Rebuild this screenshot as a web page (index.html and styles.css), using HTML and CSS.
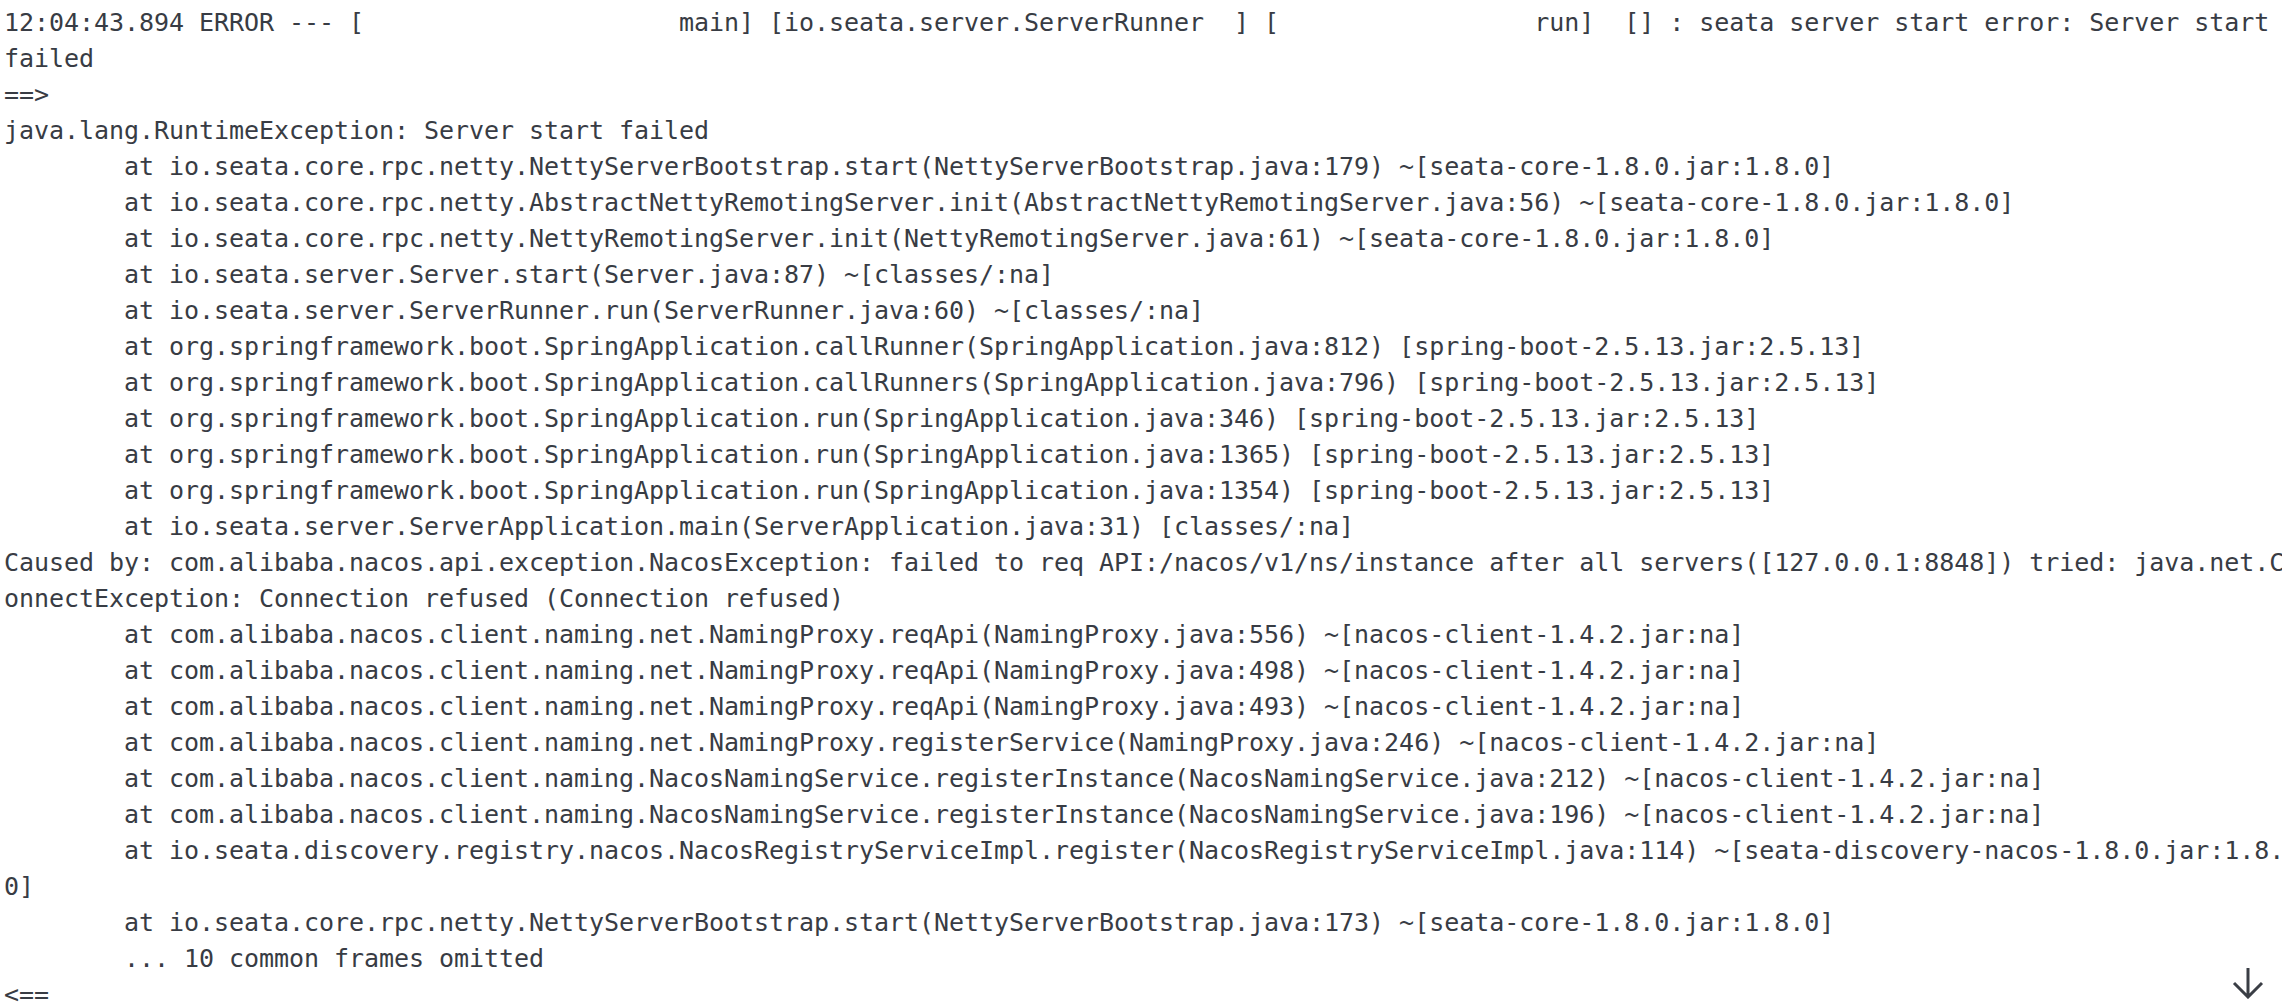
FILE: index.html
```html
<!DOCTYPE html>
<html lang="en">
<head>
<meta charset="utf-8">
<title>Log</title>
<link rel="stylesheet" href="styles.css">
</head>
<body>
<main class="viewer">
<pre class="log">12:04:43.894 ERROR --- [                     main] [io.seata.server.ServerRunner  ] [                 run]  [] : seata server start error: Server start
failed
==&gt;
java.lang.RuntimeException: Server start failed
	at io.seata.core.rpc.netty.NettyServerBootstrap.start(NettyServerBootstrap.java:179) ~[seata-core-1.8.0.jar:1.8.0]
	at io.seata.core.rpc.netty.AbstractNettyRemotingServer.init(AbstractNettyRemotingServer.java:56) ~[seata-core-1.8.0.jar:1.8.0]
	at io.seata.core.rpc.netty.NettyRemotingServer.init(NettyRemotingServer.java:61) ~[seata-core-1.8.0.jar:1.8.0]
	at io.seata.server.Server.start(Server.java:87) ~[classes/:na]
	at io.seata.server.ServerRunner.run(ServerRunner.java:60) ~[classes/:na]
	at org.springframework.boot.SpringApplication.callRunner(SpringApplication.java:812) [spring-boot-2.5.13.jar:2.5.13]
	at org.springframework.boot.SpringApplication.callRunners(SpringApplication.java:796) [spring-boot-2.5.13.jar:2.5.13]
	at org.springframework.boot.SpringApplication.run(SpringApplication.java:346) [spring-boot-2.5.13.jar:2.5.13]
	at org.springframework.boot.SpringApplication.run(SpringApplication.java:1365) [spring-boot-2.5.13.jar:2.5.13]
	at org.springframework.boot.SpringApplication.run(SpringApplication.java:1354) [spring-boot-2.5.13.jar:2.5.13]
	at io.seata.server.ServerApplication.main(ServerApplication.java:31) [classes/:na]
Caused by: com.alibaba.nacos.api.exception.NacosException: failed to req API:/nacos/v1/ns/instance after all servers([127.0.0.1:8848]) tried: java.net.C
onnectException: Connection refused (Connection refused)
	at com.alibaba.nacos.client.naming.net.NamingProxy.reqApi(NamingProxy.java:556) ~[nacos-client-1.4.2.jar:na]
	at com.alibaba.nacos.client.naming.net.NamingProxy.reqApi(NamingProxy.java:498) ~[nacos-client-1.4.2.jar:na]
	at com.alibaba.nacos.client.naming.net.NamingProxy.reqApi(NamingProxy.java:493) ~[nacos-client-1.4.2.jar:na]
	at com.alibaba.nacos.client.naming.net.NamingProxy.registerService(NamingProxy.java:246) ~[nacos-client-1.4.2.jar:na]
	at com.alibaba.nacos.client.naming.NacosNamingService.registerInstance(NacosNamingService.java:212) ~[nacos-client-1.4.2.jar:na]
	at com.alibaba.nacos.client.naming.NacosNamingService.registerInstance(NacosNamingService.java:196) ~[nacos-client-1.4.2.jar:na]
	at io.seata.discovery.registry.nacos.NacosRegistryServiceImpl.register(NacosRegistryServiceImpl.java:114) ~[seata-discovery-nacos-1.8.0.jar:1.8.
0]
	at io.seata.core.rpc.netty.NettyServerBootstrap.start(NettyServerBootstrap.java:173) ~[seata-core-1.8.0.jar:1.8.0]
	... 10 common frames omitted
&lt;==</pre>
<button class="scroll-down" type="button" aria-label="Scroll to bottom">
<svg class="scroll-icon" viewBox="0 0 32 32" width="32" height="32" aria-hidden="true"><path d="M16 1 V30 M2 16 L16 30 L30 16" fill="none" stroke="currentColor" stroke-width="3"/></svg>
</button>
</main>
</body>
</html>
```
FILE: styles.css
```css
html, body {
  margin: 0;
  padding: 0;
  background: #ffffff;
  overflow: hidden;
  height: 100%;
}

.viewer {
  position: relative;
  height: 100%;
}

.log {
  margin: 0;
  padding: 5px 0 0 4px;
  font-family: "DejaVu Sans Mono", "Liberation Mono", monospace;
  font-size: 25px;
  line-height: 36px;
  letter-spacing: -0.05px;
  color: #383c44;
  white-space: pre;
  tab-size: 8;
  -moz-tab-size: 8;
}

.scroll-down {
  position: fixed;
  right: 18px;
  bottom: 9px;
  width: 32px;
  height: 32px;
  padding: 0;
  border: 0;
  background: transparent;
  color: #3a3e45;
  display: flex;
  align-items: center;
  justify-content: center;
}

.scroll-icon {
  display: block;
}
```
